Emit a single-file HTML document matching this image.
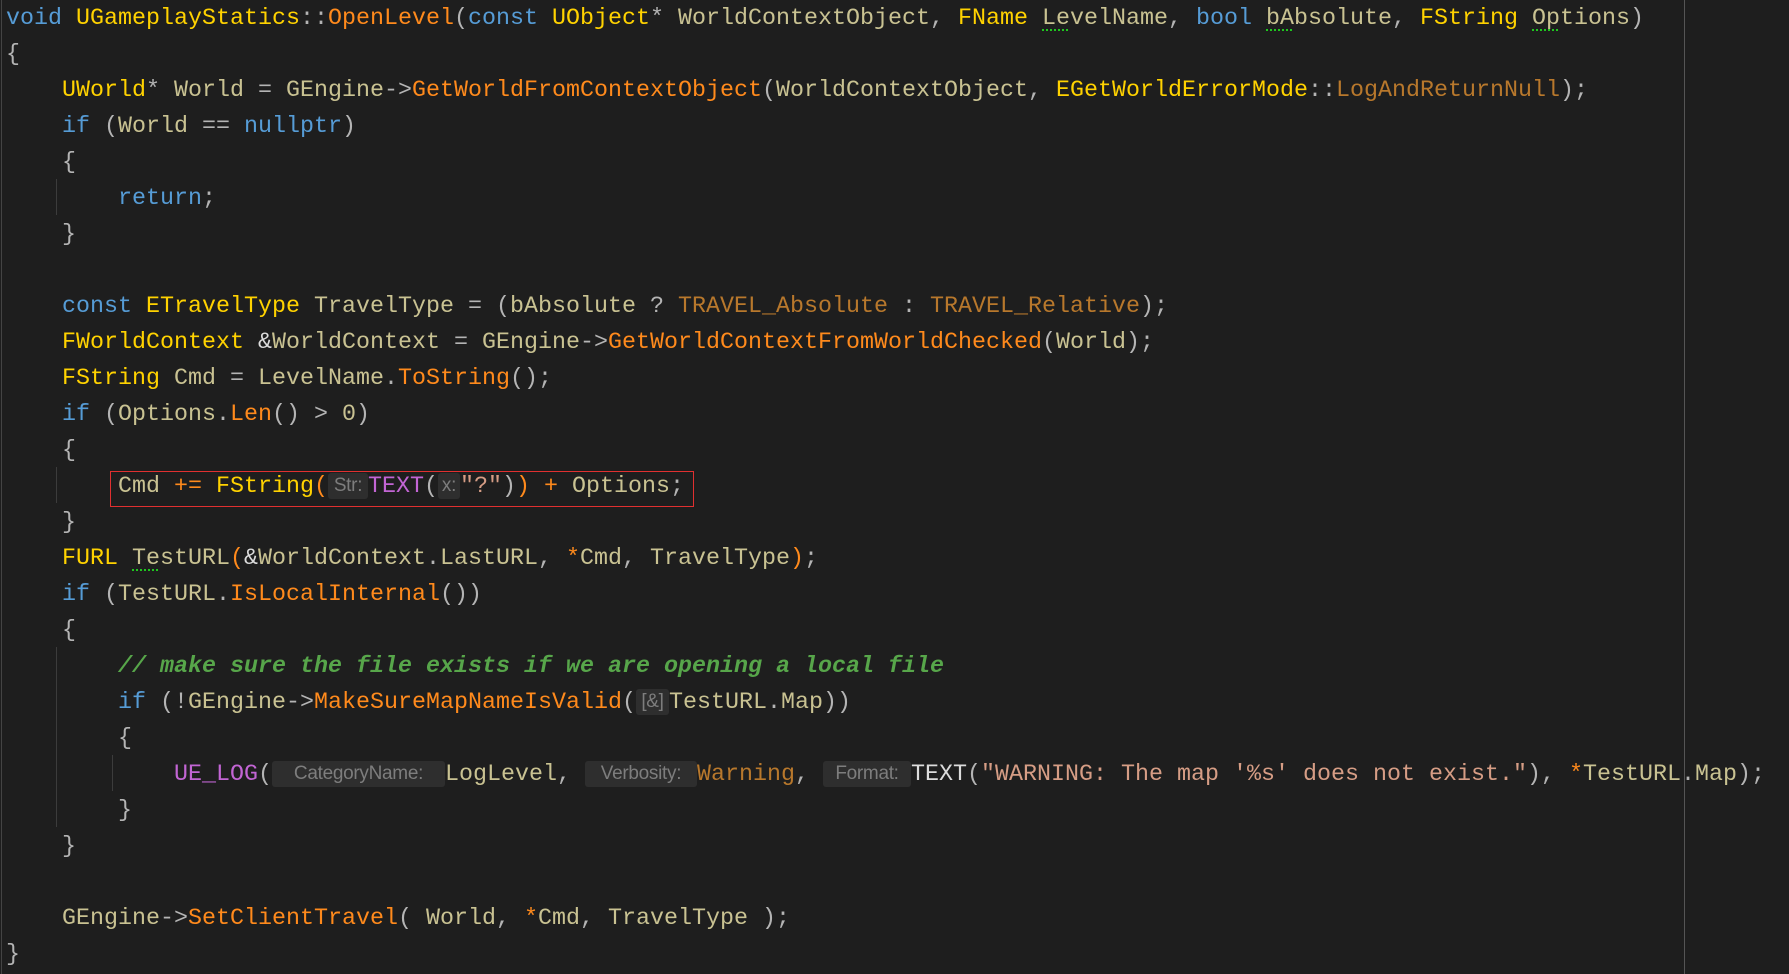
<!DOCTYPE html>
<html><head><meta charset="utf-8"><style>
html,body{margin:0;padding:0;background:#1e1e1e;width:1789px;height:974px;overflow:hidden}
.wrap{position:relative;width:1789px;height:974px}
.r{position:absolute;left:6px;height:36px;line-height:36px;white-space:pre;font-family:"Liberation Mono",monospace;font-size:23.33px;color:#b4b4b4;margin-top:2px}
.k{color:#569cd6}.t{color:#ffd200}.f{color:#ff8a1c}.v{color:#c9c292}.e{color:#b8782c}.s{color:#d69d85}.m{color:#c265d4}.o{color:#ff8a1c}.w{color:#dcdcdc}
.c{color:#57a64a;font-weight:bold;font-style:italic}
.h{display:inline-block;background:#2e2e2e;color:#7d7d7d;font-family:"Liberation Sans",sans-serif;font-size:19px;line-height:26px;border-radius:3px;text-align:center;vertical-align:1px;letter-spacing:-0.3px}
.sq{text-decoration:underline dotted #1ec81e 2px;text-underline-offset:5px}
.g{position:absolute;width:1px;background:#3c3c3c}
</style></head><body><div class="wrap">
<div class="g" style="left:1px;top:0;height:974px;background:#444"></div>
<div class="g" style="left:1684px;top:0;height:974px;background:#555"></div>
<div class="g" style="left:56px;top:179px;height:36px"></div>
<div class="g" style="left:56px;top:467px;height:36px"></div>
<div class="g" style="left:56px;top:647px;height:180px"></div>
<div class="g" style="left:112px;top:755px;height:36px"></div>
<div style="position:absolute;left:110px;top:471px;width:584px;height:36px;border:1px solid #e03030;box-sizing:border-box"></div>

<div class="r" style="top:-1px"><span class="k">void</span> <span class="t">UGameplayStatics</span>::<span class="f">OpenLevel</span>(<span class="k">const</span> <span class="t">UObject</span>* <span class="v">WorldContextObject</span>, <span class="t">FName</span> <span class="v"><span class="sq">Le</span>velName</span>, <span class="k">bool</span> <span class="v"><span class="sq">bA</span>bsolute</span>, <span class="t">FString</span> <span class="v"><span class="sq">Op</span>tions</span>)</div>
<div class="r" style="top:35px">{</div>
<div class="r" style="top:71px">    <span class="t">UWorld</span>* <span class="v">World</span> = <span class="v">GEngine</span>-&gt;<span class="f">GetWorldFromContextObject</span>(<span class="v">WorldContextObject</span>, <span class="t">EGetWorldErrorMode</span>::<span class="e">LogAndReturnNull</span>);</div>
<div class="r" style="top:107px">    <span class="k">if</span> (<span class="v">World</span> == <span class="k">nullptr</span>)</div>
<div class="r" style="top:143px">    {</div>
<div class="r" style="top:179px">        <span class="k">return</span>;</div>
<div class="r" style="top:215px">    }</div>
<div class="r" style="top:287px">    <span class="k">const</span> <span class="t">ETravelType</span> <span class="v">TravelType</span> = (<span class="v">bAbsolute</span> ? <span class="e">TRAVEL_Absolute</span> : <span class="e">TRAVEL_Relative</span>);</div>
<div class="r" style="top:323px">    <span class="t">FWorldContext</span> <span class="w">&amp;</span><span class="v">WorldContext</span> = <span class="v">GEngine</span>-&gt;<span class="f">GetWorldContextFromWorldChecked</span>(<span class="v">World</span>);</div>
<div class="r" style="top:359px">    <span class="t">FString</span> <span class="v">Cmd</span> = <span class="v">LevelName</span>.<span class="f">ToString</span>();</div>
<div class="r" style="top:395px">    <span class="k">if</span> (<span class="v">Options</span>.<span class="f">Len</span>() &gt; <span class="v">0</span>)</div>
<div class="r" style="top:431px">    {</div>
<div class="r" style="top:467px">        <span class="v">Cmd</span> <span class="o">+=</span> <span class="t">FString</span><span class="o">(</span><span class="h" style="width:40px">Str:</span><span class="m">TEXT</span>(<span class="h" style="width:22px">x:</span><span class="s">"?"</span>)<span class="o">)</span> <span class="o">+</span> <span class="v">Options</span>;</div>
<div class="r" style="top:503px">    }</div>
<div class="r" style="top:539px">    <span class="t">FURL</span> <span class="v"><span class="sq">Te</span>stURL</span><span class="o">(</span><span class="w">&amp;</span><span class="v">WorldContext</span>.<span class="v">LastURL</span>, <span class="o">*</span><span class="v">Cmd</span>, <span class="v">TravelType</span><span class="o">)</span>;</div>
<div class="r" style="top:575px">    <span class="k">if</span> (<span class="v">TestURL</span>.<span class="f">IsLocalInternal</span>())</div>
<div class="r" style="top:611px">    {</div>
<div class="r" style="top:647px">        <span class="c">// make sure the file exists if we are opening a local file</span></div>
<div class="r" style="top:683px">        <span class="k">if</span> (!<span class="v">GEngine</span>-&gt;<span class="f">MakeSureMapNameIsValid</span>(<span class="h" style="width:33px">[&amp;]</span><span class="v">TestURL</span>.<span class="v">Map</span>))</div>
<div class="r" style="top:719px">        {</div>
<div class="r" style="top:755px">            <span class="m">UE_LOG</span>(<span class="h" style="width:173px">CategoryName:</span><span class="v">LogLevel</span>, <span class="h" style="width:112px">Verbosity:</span><span class="e">Warning</span>, <span class="h" style="width:88px">Format:</span><span class="w">TEXT</span>(<span class="s">"WARNING: The map '%s' does not exist."</span>), <span class="o">*</span><span class="v">TestURL</span>.<span class="v">Map</span>);</div>
<div class="r" style="top:791px">        }</div>
<div class="r" style="top:827px">    }</div>
<div class="r" style="top:899px">    <span class="v">GEngine</span>-&gt;<span class="f">SetClientTravel</span>( <span class="v">World</span>, <span class="o">*</span><span class="v">Cmd</span>, <span class="v">TravelType</span> );</div>
<div class="r" style="top:935px">}</div>
</div></body></html>
